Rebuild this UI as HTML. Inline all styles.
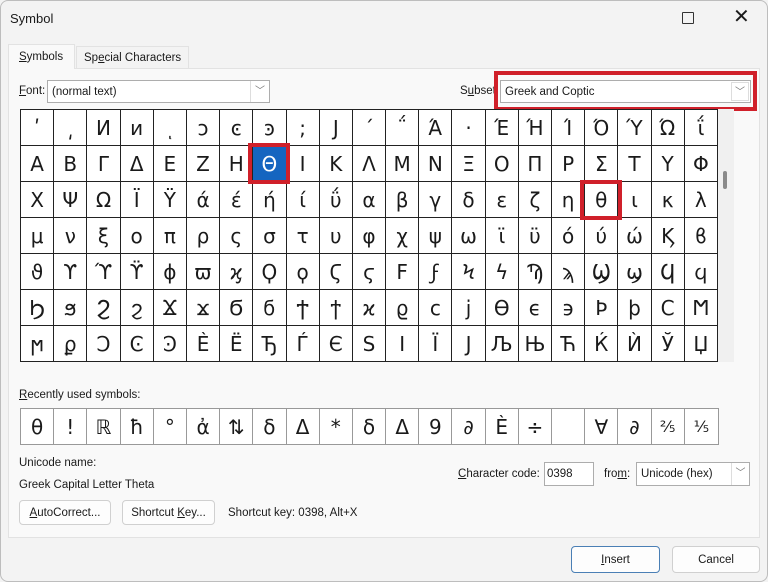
<!DOCTYPE html>
<html><head><meta charset="utf-8"><style>
*{box-sizing:border-box;margin:0;padding:0}
body{width:768px;height:582px;background:#f3f3f3;font-family:"Liberation Sans","DejaVu Sans",sans-serif;font-size:11.5px;color:#1a1a1a;position:relative;overflow:hidden}
.abs{position:absolute}
.win{left:0;top:0;width:768px;height:582px;border:1px solid #bdbdbd;border-radius:8px;background:#f3f3f3}
.panel{left:8px;top:68px;width:752px;height:470px;background:#f9f9f9;border:1px solid #e2e2e2}
.grid{left:20px;top:109px;border-top:1px solid #222;border-left:1px solid #222;display:grid;grid-template-columns:repeat(21,33.2px);background:#fff}
.grid div{height:36px;border-right:1px solid #222;border-bottom:1px solid #222;display:flex;align-items:center;justify-content:center;font-family:"DejaVu Sans",sans-serif;font-size:20px}
.rec{left:20px;top:408px;border:1px solid #999;display:grid;grid-template-columns:repeat(21,33.2px);background:#fff}
.rec div{height:35px;border-right:1px solid #999;display:flex;align-items:center;justify-content:center;font-family:"DejaVu Sans",sans-serif;font-size:20px}
.dd{background:#fff;border:1px solid #adadad;padding-left:4px;display:flex;align-items:center}
.btn{background:#fdfdfd;border:1px solid #d0d0d0;border-radius:4px;display:flex;align-items:center;justify-content:center}
u{text-decoration:underline}
</style></head><body>
<div class="abs win"></div>
<div class="abs" style="left:10px;top:11px;font-size:13px">Symbol</div>
<div class="abs" style="left:682px;top:12px;width:12px;height:12px;border:1.3px solid #333;border-radius:1px"></div>
<div class="abs" style="left:733px;top:4px;font-size:20px;font-weight:300">✕</div>
<div class="abs panel"></div>
<div class="abs" style="left:8px;top:44px;width:67px;height:25px;background:#f9f9f9;border:1px solid #e2e2e2;border-bottom:none;padding:6px 0 0 10px"><u>S</u>ymbols</div>
<div class="abs" style="left:76px;top:46px;width:113px;height:22px;border:1px solid #e2e2e2;border-bottom:none;padding:5px 0 0 7px">Sp<u>e</u>cial Characters</div>
<div class="abs" style="left:19px;top:85px"><u>F</u>ont:</div>
<div class="abs dd" style="left:47px;top:80px;width:223px;height:23px">(normal text)<span style="position:absolute;right:0;top:0;width:19px;height:21px;border-left:1px solid #ddd;color:#777;text-align:center;font-size:10px;line-height:21px">﹀</span></div>
<div class="abs" style="left:460px;top:85px">S<u>u</u>bset</div>
<div class="abs" style="left:494px;top:71px;width:263px;height:40px;border:4px solid #d0202a"></div>
<div class="abs dd" style="left:500px;top:80px;width:251px;height:23px">Greek and Coptic<span style="position:absolute;right:1px;top:1px;width:18px;height:19px;border:1px solid #ddd;color:#777;text-align:center;font-size:10px;line-height:19px">﹀</span></div>
<div class="abs grid">
<div>ʹ</div><div>͵</div><div>И</div><div>и</div><div>ͺ</div><div>ͻ</div><div>ͼ</div><div>ͽ</div><div>;</div><div>Ϳ</div><div>΄</div><div>΅</div><div>Ά</div><div>·</div><div>Έ</div><div>Ή</div><div>Ί</div><div>Ό</div><div>Ύ</div><div>Ώ</div><div>ΐ</div>
<div>Α</div><div>Β</div><div>Γ</div><div>Δ</div><div>Ε</div><div>Ζ</div><div>Η</div><div style="background:#1565c0;color:#fff">Θ</div><div>Ι</div><div>Κ</div><div>Λ</div><div>Μ</div><div>Ν</div><div>Ξ</div><div>Ο</div><div>Π</div><div>Ρ</div><div>Σ</div><div>Τ</div><div>Υ</div><div>Φ</div>
<div>Χ</div><div>Ψ</div><div>Ω</div><div>Ϊ</div><div>Ϋ</div><div>ά</div><div>έ</div><div>ή</div><div>ί</div><div>ΰ</div><div>α</div><div>β</div><div>γ</div><div>δ</div><div>ε</div><div>ζ</div><div>η</div><div>θ</div><div>ι</div><div>κ</div><div>λ</div>
<div>μ</div><div>ν</div><div>ξ</div><div>ο</div><div>π</div><div>ρ</div><div>ς</div><div>σ</div><div>τ</div><div>υ</div><div>φ</div><div>χ</div><div>ψ</div><div>ω</div><div>ϊ</div><div>ϋ</div><div>ό</div><div>ύ</div><div>ώ</div><div>Ϗ</div><div>ϐ</div>
<div>ϑ</div><div>ϒ</div><div>ϓ</div><div>ϔ</div><div>ϕ</div><div>ϖ</div><div>ϗ</div><div>Ϙ</div><div>ϙ</div><div>Ϛ</div><div>ϛ</div><div>Ϝ</div><div>ϝ</div><div>Ϟ</div><div>ϟ</div><div>Ϡ</div><div>ϡ</div><div>Ϣ</div><div>ϣ</div><div>Ϥ</div><div>ϥ</div>
<div>Ϧ</div><div>ϧ</div><div>Ϩ</div><div>ϩ</div><div>Ϫ</div><div>ϫ</div><div>Ϭ</div><div>ϭ</div><div>Ϯ</div><div>ϯ</div><div>ϰ</div><div>ϱ</div><div>ϲ</div><div>ϳ</div><div>ϴ</div><div>ϵ</div><div>϶</div><div>Ϸ</div><div>ϸ</div><div>Ϲ</div><div>Ϻ</div>
<div>ϻ</div><div>ϼ</div><div>Ͻ</div><div>Ͼ</div><div>Ͽ</div><div>Ѐ</div><div>Ё</div><div>Ђ</div><div>Ѓ</div><div>Є</div><div>Ѕ</div><div>І</div><div>Ї</div><div>Ј</div><div>Љ</div><div>Њ</div><div>Ћ</div><div>Ќ</div><div>Ѝ</div><div>Ў</div><div>Џ</div>
</div>
<div class="abs" style="left:718px;top:109px;width:16px;height:253px;background:#f0f0f0"></div>
<div class="abs" style="left:723px;top:171px;width:4px;height:18px;background:#8a8a8a;border-radius:2px"></div>
<div class="abs" style="left:248px;top:143px;width:42px;height:41px;border:4px solid #d0202a"></div>
<div class="abs" style="left:580px;top:180px;width:42px;height:40px;border:4px solid #d0202a"></div>
<div class="abs" style="left:19px;top:389px"><u>R</u>ecently used symbols:</div>
<div class="abs rec">
<div>θ</div><div>!</div><div>ℝ</div><div>ħ</div><div>°</div><div>ἀ</div><div>⇅</div><div>δ</div><div>Δ</div><div>*</div><div>δ</div><div>Δ</div><div>9</div><div>∂</div><div>È</div><div>÷</div><div></div><div>∀</div><div>∂</div><div style="font-size:16px">⅖</div><div style="font-size:16px;border-right:none">⅕</div>
</div>
<div class="abs" style="left:19px;top:457px">Unicode name:</div>
<div class="abs" style="left:19px;top:479px">Greek Capital Letter Theta</div>
<div class="abs" style="left:458px;top:468px"><u>C</u>haracter code:</div>
<div class="abs dd" style="left:544px;top:462px;width:50px;height:24px;padding-left:2px">0398</div>
<div class="abs" style="left:604px;top:468px">fro<u>m</u>:</div>
<div class="abs dd" style="left:636px;top:462px;width:114px;height:24px">Unicode (hex)<span style="position:absolute;right:0;top:0;width:18px;height:22px;border-left:1px solid #ddd;color:#777;text-align:center;font-size:10px;line-height:22px">﹀</span></div>
<div class="abs btn" style="left:19px;top:500px;width:92px;height:25px"><span><u>A</u>utoCorrect...</span></div>
<div class="abs btn" style="left:122px;top:500px;width:93px;height:25px"><span>Shortcut <u>K</u>ey...</span></div>
<div class="abs" style="left:228px;top:507px">Shortcut key: 0398, Alt+X</div>
<div class="abs btn" style="left:571px;top:546px;width:89px;height:27px;border-color:#4a7fb5"><span><u>I</u>nsert</span></div>
<div class="abs btn" style="left:672px;top:546px;width:88px;height:27px">Cancel</div>
</body></html>
